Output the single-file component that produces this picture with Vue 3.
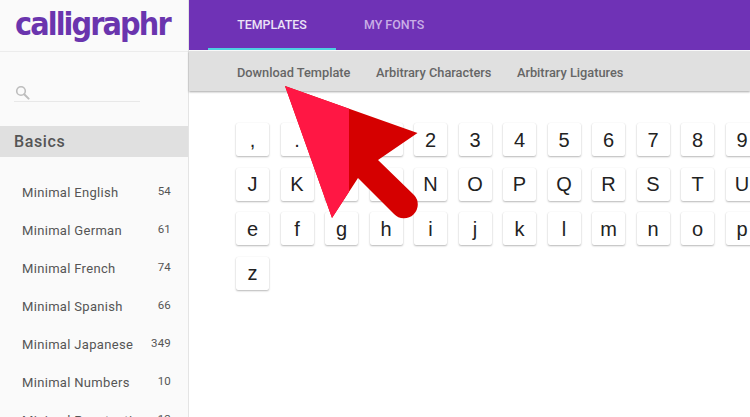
<script setup>
const items = [
  ['Minimal English', 54], ['Minimal German', 61], ['Minimal French', 74],
  ['Minimal Spanish', 66], ['Minimal Japanese', 349], ['Minimal Numbers', 10],
  ['Minimal Punctuation', 12]
]
const keys = [
  ',', '.', '0', '1', '2', '3', '4', '5', '6', '7', '8', '9',
  'J', 'K', 'L', 'M', 'N', 'O', 'P', 'Q', 'R', 'S', 'T', 'U',
  'e', 'f', 'g', 'h', 'i', 'j', 'k', 'l', 'm', 'n', 'o', 'p',
  'z'
]
</script>

<template>
  <div class="app">
    <aside class="side">
      <div class="logo"><span class="logo-text">calligraphr</span></div>
      <div class="search">
        <svg class="search-icon" width="15" height="15" viewBox="0 0 15 15" fill="none" stroke="#bdbdbd" stroke-width="1.6">
          <circle cx="6" cy="6" r="4.3" />
          <path d="M9.2 9.2 L13.6 13.6" stroke-linecap="round" stroke-width="2" />
        </svg>
      </div>
      <div class="section">Basics</div>
      <ul class="list">
        <li v-for="it in items" :key="it[0]" class="row">
          <span>{{ it[0] }}</span><span class="count">{{ it[1] }}</span>
        </li>
      </ul>
    </aside>
    <main class="main">
      <header class="top">
        <nav class="tabs">
          <a class="tab active">TEMPLATES</a>
          <a class="tab">MY FONTS</a>
        </nav>
      </header>
      <div class="sub">
        <a>Download Template</a>
        <a>Arbitrary Characters</a>
        <a>Arbitrary Ligatures</a>
      </div>
      <section class="keys">
        <div v-for="(k, i) in keys" :key="i" class="key">{{ k }}</div>
      </section>
    </main>
    <svg class="arrow" width="750" height="417" viewBox="0 0 750 417">
      <defs>
        <clipPath id="arrow-left"><rect x="0" y="0" width="349" height="417" /></clipPath>
      </defs>
      <path fill="#d50000" d="M285 86 L417.500 133 L378 160 L414 195 A13.500 13.500 0 0 1 394 214 L358 178 L332 218 Z" />
      <path clip-path="url(#arrow-left)" fill="#ff1744" d="M285 86 L417.500 133 L378 160 L414 195 A13.500 13.500 0 0 1 394 214 L358 178 L332 218 Z" />
    </svg>
  </div>
</template>

<style>
html, body { margin: 0; overflow: hidden; background: #fff; }
</style>

<style scoped>
.app {
  position: relative;
  display: flex;
  width: 750px;
  height: 417px;
  overflow: hidden;
  font-family: Roboto, "Liberation Sans", sans-serif;
}
.side {
  width: 188px;
  flex: none;
  background: #fafafa;
  border-right: 1px solid #e4e4e4;
  box-sizing: content-box;
}
.logo {
  height: 52px;
  box-sizing: border-box;
  border-bottom: 1px solid #ececec;
  padding-left: 15px;
  display: flex;
  align-items: center;
}
.logo-text {
  font-family: "DejaVu Sans", sans-serif;
  font-stretch: condensed;
  font-weight: 700;
  font-size: 32px;
  letter-spacing: -1.9px;
  color: #6a35ae;
  line-height: 1;
  margin-top: -3px;
}
.search {
  height: 50px;
  margin: 0 48px 0 14px;
  border-bottom: 1px solid #e8e8e8;
  box-sizing: border-box;
  display: flex;
  align-items: flex-end;
  padding: 0 0 0 1px;
}
.search-icon { margin-bottom: 1px; }
.section {
  margin-top: 24px;
  height: 31px;
  line-height: 31px;
  padding-left: 14px;
  background: #e0e0e0;
  color: #555;
  font-size: 16px;
  font-weight: 500;
  letter-spacing: 0.6px;
}
.list {
  list-style: none;
  margin: 16px 0 0;
  padding: 0;
}
.row {
  height: 38px;
  line-height: 39px;
  padding: 0 17px 0 22px;
  display: flex;
  justify-content: space-between;
  font-size: 13px;
  letter-spacing: 0.32px;
  color: #555;
}
.count { font-size: 11.500px; letter-spacing: 0.2px; margin-top: -1px; }
.main { flex: 1; min-width: 0; display: flex; flex-direction: column; }
.top {
  height: 50px;
  background: #6f32b6;
  flex: none;
}
.tabs { display: flex; padding-left: 19px; height: 50px; }
.tab {
  height: 50px;
  box-sizing: border-box;
  line-height: 50px;
  font-size: 12.400px;
  font-weight: 500;
  color: #c9aee6;
  padding: 0 28px;
}
.tab.active {
  color: #ece3f7;
  border-bottom: 2px solid #4dd0e1;
  width: 128px;
  text-align: center;
  padding: 0;
}
.sub {
  height: 40px;
  flex: none;
  margin-top: 1px;
  background: #e0e0e0;
  box-shadow: 0 1px 2px rgba(0, 0, 0, 0.35);
  display: flex;
  gap: 25.500px;
  padding: 2px 0 0 48px;
  box-sizing: border-box;
  align-items: center;
  font-size: 12.800px;
  font-weight: 500;
  color: #666;
  position: relative;
}
.keys {
  display: grid;
  grid-template-columns: repeat(12, 33px);
  grid-auto-rows: 33px;
  column-gap: 11.500px;
  row-gap: 11.500px;
  padding: 32px 0 0 47px;
  width: max-content;
}
.key {
  background: #fff;
  border-radius: 2px;
  box-shadow: 0 1px 2px rgba(0, 0, 0, 0.28), 0 0 1px rgba(0, 0, 0, 0.08);
  display: flex;
  align-items: center;
  justify-content: center;
  padding-top: 1px;
  box-sizing: border-box;
  font-family: "Liberation Sans", Arial, sans-serif;
  font-size: 20px;
  color: #222;
}
.arrow { position: absolute; left: 0; top: 0; pointer-events: none; }
</style>
